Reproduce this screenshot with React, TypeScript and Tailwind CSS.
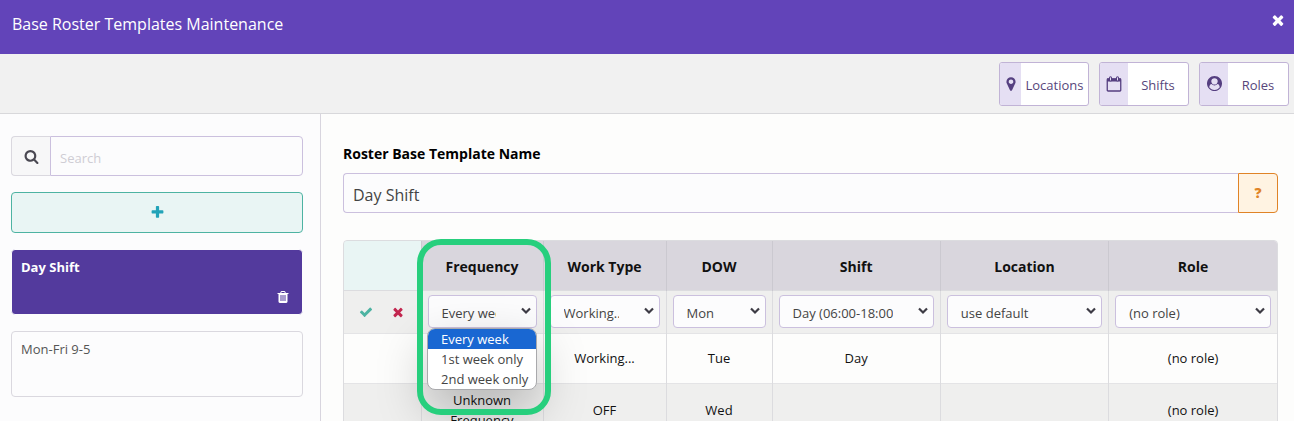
import { useState } from "react";
import type { ReactNode } from "react";
import clsx from "clsx";

const ICONS = {
  times:
    "M1490 1322q0 40-28 68l-136 136q-28 28-68 28t-68-28l-294-294-294 294q-28 28-68 28t-68-28l-136-136q-28-28-28-68t28-68l294-294-294-294q-28-28-28-68t28-68l136-136q28-28 68-28t68 28l294 294 294-294q28-28 68-28t68 28l136 136q28 28 28 68t-28 68l-294 294 294 294q28 28 28 68z",
  check:
    "M1671 566q0 40-28 68l-724 724-136 136q-28 28-68 28t-68-28l-136-136-362-362q-28-28-28-68t28-68l136-136q28-28 68-28t68 28l294 295 656-657q28-28 68-28t68 28l136 136q28 28 28 68z",
  plus: "M1600 736v192q0 40-28 68t-68 28h-416v416q0 40-28 68t-68 28h-192q-40 0-68-28t-28-68v-416h-416q-40 0-68-28t-28-68v-192q0-40 28-68t68-28h416v-416q0-40 28-68t68-28h192q40 0 68 28t28 68v416h416q40 0 68 28t28 68z",
  search:
    "M1216 832q0-185-131.500-316.500t-316.500-131.500-316.500 131.500-131.500 316.500 131.500 316.500 316.500 131.500 316.500-131.500 131.500-316.500zm512 832q0 52-38 90t-90 38q-54 0-90-38l-343-342q-179 124-399 124-143 0-273.500-55.500t-225-150-150-225-55.500-273.500 55.500-273.500 150-225 225-150 273.500-55.500 273.500 55.500 225 150 150 225 55.500 273.500q0 220-124 399l343 343q37 37 37 90z",
  marker:
    "M1152 640q0-106-75-181t-181-75-181 75-75 181 75 181 181 75 181-75 75-181zm256 0q0 109-33 179l-364 774q-16 33-47.500 52t-67.500 19-67.500-19-46.500-52l-365-774q-33-70-33-179 0-212 150-362t362-150 362 150 150 362z",
  user: "M1523 1339q-22-155-87.500-257.500t-184.500-118.500q-67 74-159.500 115.500t-195.500 41.500-195.500-41.500-159.500-115.500q-119 16-184.500 118.500t-87.500 257.500q106 150 271 237.500t356 87.500 356-87.500 271-237.500zm-243-699q0-159-112.500-271.500t-271.500-112.500-271.500 112.500-112.500 271.500 112.500 271.500 271.500 112.500 271.500-112.500 112.500-271.500zm512 256q0 182-71 347.500t-190.500 286-285.500 191.500-349 71q-182 0-348-71t-286-191-191-286-71-348 71-348 191-286 286-191 348-71 348 71 286 191 191 286 71 348z",
  trash:
    "M704 1376v-704q0-14-9-23t-23-9h-64q-14 0-23 9t-9 23v704q0 14 9 23t23 9h64q14 0 23-9t9-23zm256 0v-704q0-14-9-23t-23-9h-64q-14 0-23 9t-9 23v704q0 14 9 23t23 9h64q14 0 23-9t9-23zm256 0v-704q0-14-9-23t-23-9h-64q-14 0-23 9t-9 23v704q0 14 9 23t23 9h64q14 0 23-9t9-23zm-544-992h448l-48-117q-7-9-17-11h-317q-10 2-17 11zm928 32v64q0 14-9 23t-23 9h-96v948q0 83-47 143.500t-113 60.500h-832q-66 0-113-58.500t-47-141.500v-952h-96q-14 0-23-9t-9-23v-64q0-14 9-23t23-9h309l70-167q15-37 54-63t79-26h320q40 0 79 26t54 63l70 167h309q14 0 23 9t9 23z",
};

function Icon({
  name,
  className,
}: {
  name: keyof typeof ICONS;
  className?: string;
}) {
  return (
    <svg
      viewBox="0 0 1792 1792"
      fill="currentColor"
      aria-hidden="true"
      className={clsx("shrink-0", className)}
    >
      <path d={ICONS[name]} />
    </svg>
  );
}

function CalendarIcon() {
  return (
    <svg viewBox="0 0 15 16" fill="none" stroke="currentColor" aria-hidden="true" className="h-4 w-4">
      <rect x="0.75" y="3" width="13.500" height="12" rx="0.8" strokeWidth="1.300" />
      <path d="M0.500 4h14" strokeWidth="2.800" />
      <path d="M4 1.800v2.200M11 1.800v2.200" strokeWidth="3" strokeLinecap="round" />
      <path d="M4 1.800v2.200M11 1.800v2.200" stroke="#e5dff3" strokeWidth="1" strokeLinecap="round" />
    </svg>
  );
}

function ToolbarButton({
  label,
  icon,
  narrow,
}: {
  label: string;
  icon: ReactNode;
  narrow?: boolean;
}) {
  return (
    <button
      type="button"
      className="flex h-11 w-[90px] overflow-hidden rounded-[3px] border border-[#c1b3d6] bg-white text-[13px] text-[#57467b]"
    >
      <span
        className={clsx(
          "flex h-full shrink-0 items-center justify-center bg-[#e5dff3] text-[#553f80]",
          narrow ? "w-[21px]" : "w-7"
        )}
      >
        {icon}
      </span>
      <span className="flex h-full flex-1 items-center justify-center pt-1">
        {label}
      </span>
    </button>
  );
}

function SelectBox({ label, options }: { label: string; options: string[] }) {
  return (
    <div className="relative">
      <select
        aria-label={label}
        className="block h-[33px] w-full appearance-none rounded border border-[#cbc0de] bg-[#fcfcfd] pt-1 pr-10 pl-[13px] text-[13px] text-[#444] outline-none"
      >
        {options.map((option) => (
          <option key={option}>{option}</option>
        ))}
      </select>
      <svg
        viewBox="0 0 10 8"
        fill="none"
        stroke="#3d3b45"
        strokeWidth="2.200"
        aria-hidden="true"
        className="pointer-events-none absolute top-3 right-1.5 h-2 w-2.5"
      >
        <path d="M1 1.500l4 4 4-4" />
      </svg>
    </div>
  );
}

const frequencies = ["Every week", "1st week only", "2nd week only"];

const columns = [
  { name: "Frequency", width: "w-[122px]", options: frequencies },
  { name: "Work Type", width: "w-[123px]", options: ["Working...", "OFF"] },
  { name: "DOW", width: "w-[106px]", options: ["Mon", "Tue", "Wed"] },
  { name: "Shift", width: "", options: ["Day (06:00-18:00)"] },
  { name: "Location", width: "", options: ["use default"] },
  { name: "Role", width: "", options: ["(no role)"] },
];

const rows = [
  ["", "", "Working...", "Tue", "Day", "", "(no role)"],
  ["", "Unknown Frequency", "OFF", "Wed", "", "", "(no role)"],
];

function RosterTable() {
  return (
    <div className="relative mt-[27px]">
      <div className="overflow-hidden rounded border border-[#dcdcdf]">
        <table className="w-full table-fixed border-collapse text-center text-[13px] text-[#111]">
          <colgroup>
            <col className="w-[77px]" />
            {columns.map((column) => (
              <col key={column.name} className={column.width} />
            ))}
          </colgroup>
          <thead>
            <tr className="h-[49px] border-b border-[#dcdcdf] bg-[#d9d6dd]">
              <td className="bg-[#e9f5f4]" />
              {columns.map((column) => (
                <th
                  key={column.name}
                  scope="col"
                  className="border-l border-[#cbc9d0] pt-1 text-sm font-bold"
                >
                  {column.name}
                </th>
              ))}
            </tr>
          </thead>
          <tbody>
            <tr className="h-[43px] border-b border-[#e4e4e6] bg-[#efefee]">
              <td>
                <div className="flex items-center justify-center gap-[18px]">
                  <button type="button" aria-label="Save row" className="text-[#4db3a2]">
                    <Icon name="check" className="size-3.5" />
                  </button>
                  <button type="button" aria-label="Cancel edit" className="text-[#c2264f]">
                    <Icon name="times" className="size-3.5" />
                  </button>
                </div>
              </td>
              {columns.map((column) => (
                <td key={column.name} className="border-l border-[#dcdcdf] px-1.5">
                  <SelectBox label={column.name} options={column.options} />
                </td>
              ))}
            </tr>
            {rows.map((row, index) => (
              <tr
                key={index}
                className="h-[50px] border-b border-[#e4e4e6] odd:bg-[#efefee] even:bg-[#fdfdfc]"
              >
                {row.map((cell, i) => (
                  <td
                    key={i}
                    className={clsx(
                      "px-3 py-1.5 leading-5",
                      i > 0 && "border-l border-[#dcdcdf]"
                    )}
                  >
                    {cell}
                  </td>
                ))}
              </tr>
            ))}
          </tbody>
        </table>
      </div>

      <ul
        role="listbox"
        aria-label="Frequency options"
        className="absolute top-[88px] left-[84px] w-[110px] overflow-hidden rounded-lg border border-[#a9a9ac] bg-white text-[13px] leading-5 whitespace-nowrap text-[#444] shadow-[0_20px_50px_rgba(0,0,0,0.25)]"
      >
        {frequencies.map((option, index) => (
          <li
            key={option}
            role="option"
            aria-selected={index === 0}
            className={clsx("pl-[13px]", index === 0 && "bg-[#1967d2] text-white")}
          >
            {option}
          </li>
        ))}
      </ul>
      <div className="pointer-events-none absolute -top-px left-[74px] h-44 w-[134px] rounded-3xl border-[6px] border-[#27cf7d]" />
    </div>
  );
}

export default function App() {
  const [name, setName] = useState("Day Shift");

  return (
    <div className="flex h-screen flex-col overflow-hidden bg-[#fdfdfc] font-['Open_Sans','Noto_Sans',sans-serif]">
      <header className="flex h-[54px] shrink-0 items-start justify-between bg-[#6244b9] pt-3 pr-2 pl-3 text-white">
        <h1 className="text-base leading-6">Base Roster Templates Maintenance</h1>
        <button type="button" aria-label="Close">
          <Icon name="times" className="size-4" />
        </button>
      </header>

      <div className="flex h-[60px] shrink-0 items-center justify-end gap-2.5 border-b border-[#d8d8db] bg-[#f1f1f1] pr-[5px]">
        <ToolbarButton narrow label="Locations" icon={<Icon name="marker" className="size-4" />} />
        <ToolbarButton label="Shifts" icon={<CalendarIcon />} />
        <ToolbarButton label="Roles" icon={<Icon name="user" className="size-[15px]" />} />
      </div>

      <div className="flex min-h-0 flex-1">
        <aside className="flex w-[321px] shrink-0 flex-col gap-4 border-r border-[#d8d5de] bg-[#fcfcfd] pt-[22px] pr-[17px] pl-[11px]">
          <div className="flex h-10">
            <label
              htmlFor="search"
              aria-label="Search"
              className="flex w-[39px] items-center justify-center rounded-l border border-r-0 border-[#dad8df] bg-[#f7f7f8] text-[#4a4852]"
            >
              <Icon name="search" className="size-[15px]" />
            </label>
            <input
              id="search"
              type="text"
              placeholder="Search"
              className="min-w-0 flex-1 rounded-r border border-[#cbc0de] bg-[#fcfcfd] px-[9px] pt-1.5 text-[13px] outline-none placeholder:text-[#cfcdd4]"
            />
          </div>
          <button
            type="button"
            aria-label="Add template"
            className="flex h-[41px] shrink-0 items-center justify-center rounded border border-[#4db3a2] bg-[#e9f5f4] text-[#22a3b8]"
          >
            <Icon name="plus" className="size-[15px]" />
          </button>
          <div className="flex h-[66px] shrink-0 flex-col justify-between rounded border border-[#fcfcfd] bg-[#533a9d] px-[9px] pt-2 pb-2.5 text-[13px] leading-[18px] font-bold text-white">
            <span>Day Shift</span>
            <button type="button" aria-label="Delete template" className="mr-[3px] self-end">
              <Icon name="trash" className="size-3.5" />
            </button>
          </div>
          <div className="h-[66px] shrink-0 rounded border border-[#dad8df] px-[9px] py-2 text-[13px] leading-[18px] text-[#555]">
            Mon-Fri 9-5
          </div>
        </aside>

        <main className="min-w-0 flex-1 pt-[30px] pr-4 pl-[22px]">
          <label htmlFor="template-name" className="block text-sm leading-5 font-bold text-black">
            Roster Base Template Name
          </label>
          <div className="mt-[9px] flex h-10">
            <input
              id="template-name"
              type="text"
              value={name}
              onChange={(e) => setName(e.target.value)}
              className="min-w-0 flex-1 rounded-l border border-r-0 border-[#cbc0de] bg-[#fcfcfd] px-[9px] pt-1 text-base text-[#444] outline-none"
            />
            <button
              type="button"
              aria-label="Help"
              className="w-10 rounded-r border border-[#e08326] bg-[#fff3e2] text-sm font-extrabold text-[#e08326]"
            >
              ?
            </button>
          </div>
          <RosterTable />
        </main>
      </div>
    </div>
  );
}
